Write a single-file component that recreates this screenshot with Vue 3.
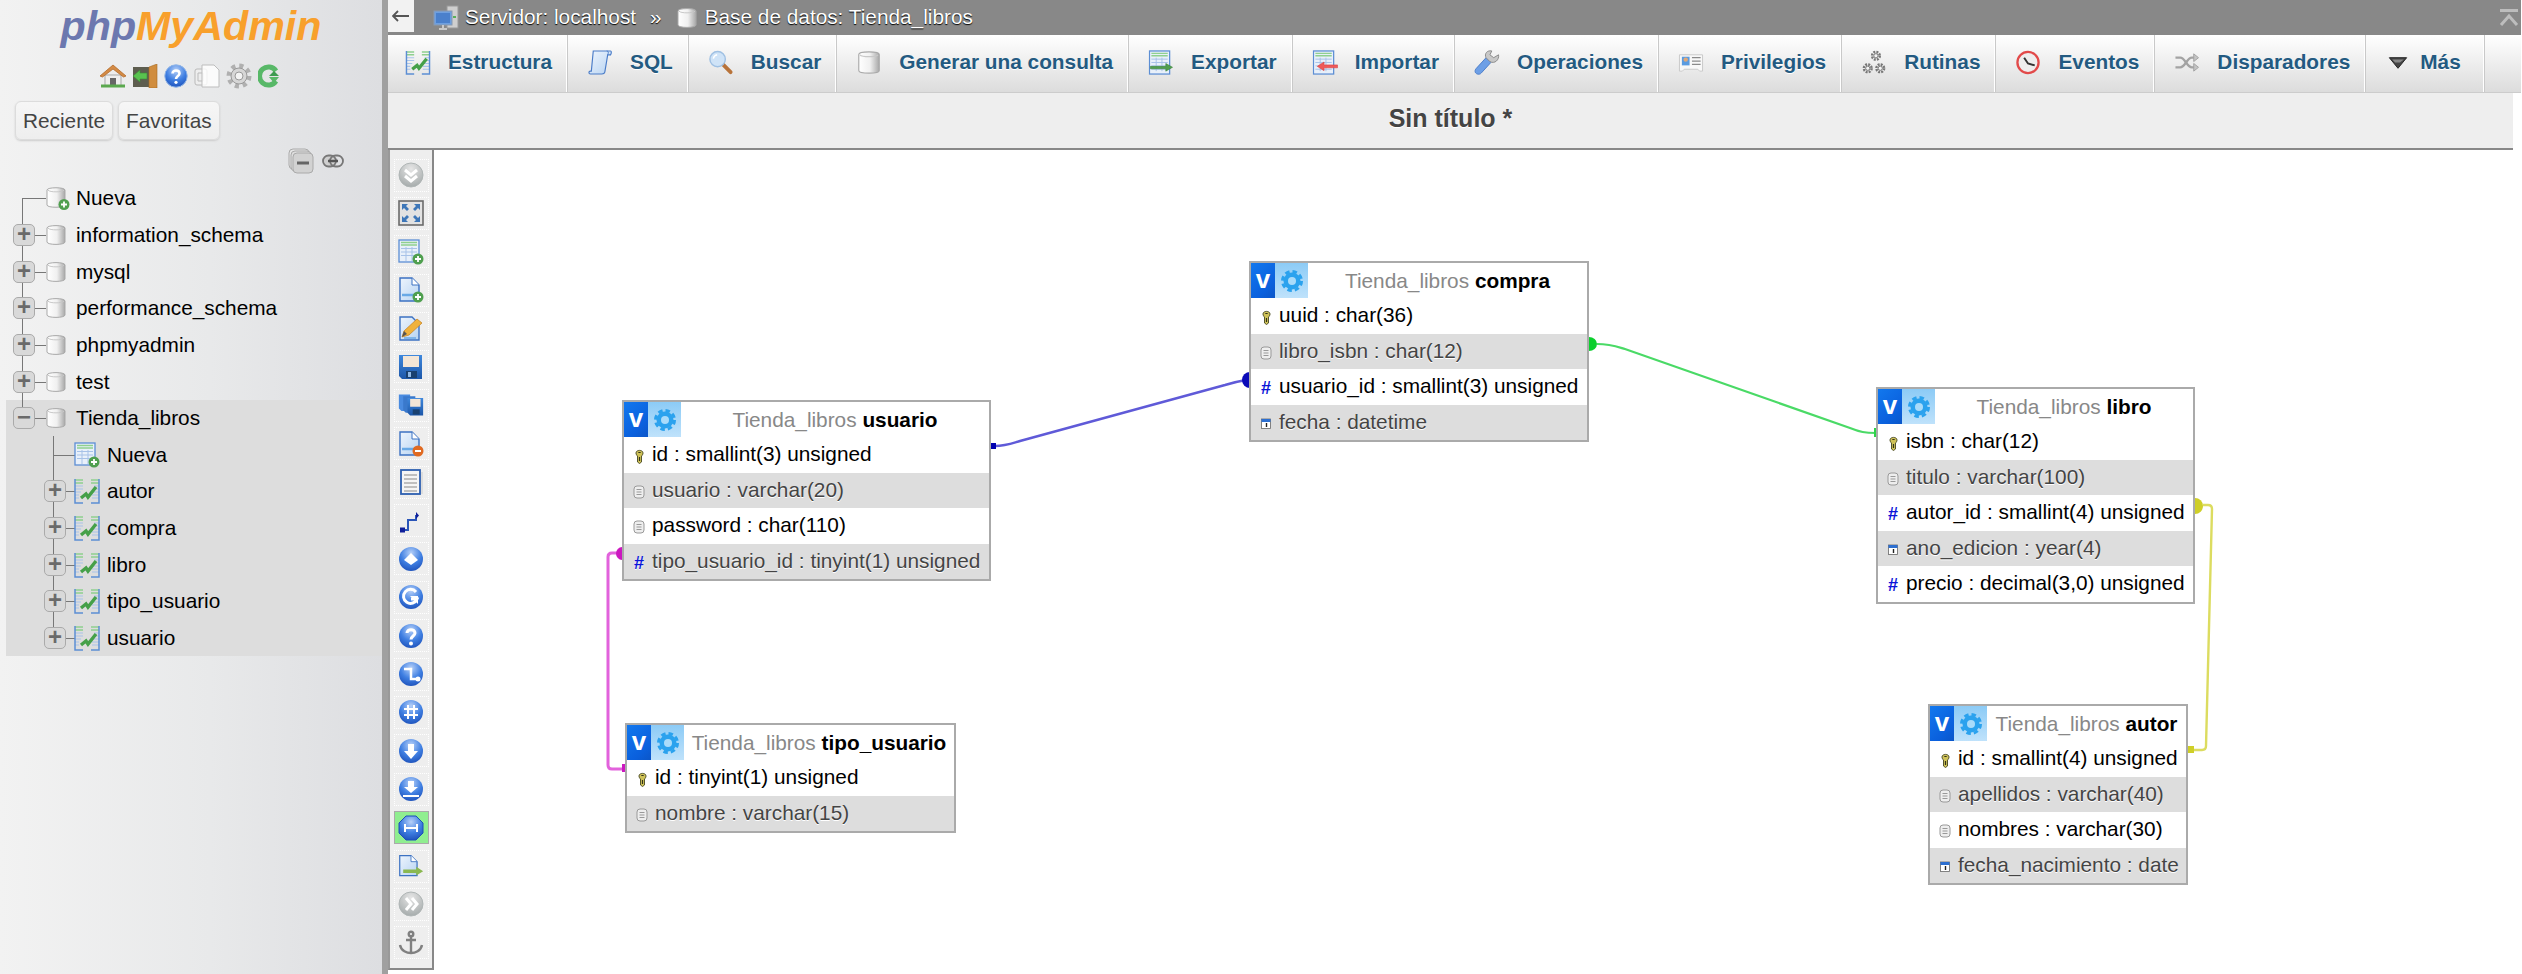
<script setup>
const tabs = [
  { label: 'Estructura', icon: 'rel' },
  { label: 'SQL', icon: 'sql' },
  { label: 'Buscar', icon: 'search' },
  { label: 'Generar una consulta', icon: 'db' },
  { label: 'Exportar', icon: 'export' },
  { label: 'Importar', icon: 'import' },
  { label: 'Operaciones', icon: 'wrench' },
  { label: 'Privilegios', icon: 'card' },
  { label: 'Rutinas', icon: 'gears' },
  { label: 'Eventos', icon: 'clock' },
  { label: 'Disparadores', icon: 'shuffle' },
  { label: 'Más', icon: 'tri' }
]
const databases = ['information_schema', 'mysql', 'performance_schema', 'phpmyadmin', 'test']
const treeTables = ['autor', 'compra', 'libro', 'tipo_usuario', 'usuario']
const tools = ['chevd', 'full', 'tableplus', 'pageplus', 'pageedit', 'floppy', 'floppies', 'pageminus', 'list', 'route', 'bup', 'bg', 'bq', 'brel', 'bgrid', 'bdown', 'bsave', 'bwidth', 'pagearrow', 'chevr', 'anchor']

const OX = 434
const OY = 150
const entities = [
  { name: 'compra', x: 1249, y: 261, w: 340, cols: [['uuid : char(36)', 'key'], ['libro_isbn : char(12)', 'txt'], ['usuario_id : smallint(3) unsigned', 'num'], ['fecha : datetime', 'date']] },
  { name: 'usuario', x: 622, y: 400, w: 369, cols: [['id : smallint(3) unsigned', 'key'], ['usuario : varchar(20)', 'txt'], ['password : char(110)', 'txt'], ['tipo_usuario_id : tinyint(1) unsigned', 'num']] },
  { name: 'libro', x: 1876, y: 387, w: 319, cols: [['isbn : char(12)', 'key'], ['titulo : varchar(100)', 'txt'], ['autor_id : smallint(4) unsigned', 'num'], ['ano_edicion : year(4)', 'date'], ['precio : decimal(3,0) unsigned', 'num']] },
  { name: 'tipo_usuario', x: 625, y: 723, w: 331, cols: [['id : tinyint(1) unsigned', 'key'], ['nombre : varchar(15)', 'txt']] },
  { name: 'autor', x: 1928, y: 704, w: 260, cols: [['id : smallint(4) unsigned', 'key'], ['apellidos : varchar(40)', 'txt'], ['nombres : varchar(30)', 'txt'], ['fecha_nacimiento : date', 'date']] }
]
const pos = (e) => ({ left: e.x - OX + 'px', top: e.y - OY + 'px', width: e.w + 'px' })
</script>

<template>
  <div class="app">
    <svg class="defs" width="0" height="0" aria-hidden="true">
      <defs>
        <linearGradient id="gDb" x1="0" x2="1" y1="0" y2="0"><stop offset="0" stop-color="#fff"/><stop offset=".55" stop-color="#f0f0f0"/><stop offset="1" stop-color="#a8a8a8"/></linearGradient>
        <linearGradient id="gPage" x1="0" x2="1" y1="0" y2="1"><stop offset="0" stop-color="#eef5fd"/><stop offset="1" stop-color="#b7d3f2"/></linearGradient>
        <radialGradient id="gBlue" cx=".5" cy=".25" r=".8"><stop offset="0" stop-color="#b6d0f8"/><stop offset=".55" stop-color="#3f7fe2"/><stop offset="1" stop-color="#1c4fb8"/></radialGradient>
        <radialGradient id="gGray" cx=".5" cy=".25" r=".8"><stop offset="0" stop-color="#e6e6e6"/><stop offset="1" stop-color="#a2a8a8"/></radialGradient>
        <linearGradient id="gFloppy" x1="0" x2="0" y1="0" y2="1"><stop offset="0" stop-color="#3f88dd"/><stop offset="1" stop-color="#1c56a8"/></linearGradient>
      </defs>

      <symbol id="i-db" viewBox="0 0 20 22"><path d="M1 4C1 .8 19 .8 19 4V18C19 21.2 1 21.2 1 18Z" fill="url(#gDb)" stroke="#a9a9a9"/><path d="M2 4.200C4 6.400 16 6.400 18 4.200" fill="none" stroke="#c8c8c8"/></symbol>
      <symbol id="i-dbplus" viewBox="0 0 24 24"><path d="M1 4C1 1 19 1 19 4V19C19 22 1 22 1 19Z" fill="url(#gDb)" stroke="#a9a9a9"/><path d="M2 4.200C4 6.400 16 6.400 18 4.200" fill="none" stroke="#c8c8c8"/><circle cx="18" cy="18.500" r="5.500" fill="#4f9f4f"/><path d="M15 18.500H21M18 15.500V21.500" stroke="#fff" stroke-width="1.800"/></symbol>
      <symbol id="i-rel" viewBox="0 0 26 26">
        <g fill="none"><path d="M1 2H9M1 5H9" stroke="#8fd08f" stroke-width="1.500"/><path d="M1 8H9M1 11H9M1 14H7M1 17H5M1 20H5" stroke="#a9c4ea" stroke-width="1.100"/><path d="M1 1V25H9" stroke="#5c8ed4" stroke-width="1.500"/><path d="M17 2H25M17 5H25" stroke="#8fd08f" stroke-width="1.500"/><path d="M20 8H25M19 11H25M18 14H25M18 17H25M18 20H25" stroke="#a9c4ea" stroke-width="1.100"/><path d="M25 1V25H17" stroke="#5c8ed4" stroke-width="1.500"/></g>
        <path d="M7 20L12 16L14 19L22 9" fill="none" stroke="#45a049" stroke-width="3.400"/>
      </symbol>
      <symbol id="i-sql" viewBox="0 0 26 26"><path d="M6 1H24C25 1 25 3 24 5H21L18 23C17.500 25 16 25 15 25H3C1 25 1 22 3 22H4Z" fill="url(#gPage)" stroke="#4a7cc8" stroke-width="1.200"/><path d="M21 5C22 3 22 1 20 1" fill="none" stroke="#4a7cc8"/></symbol>
      <symbol id="i-search" viewBox="0 0 26 26"><path d="M15 15L23 23" stroke="#b8733a" stroke-width="4" stroke-linecap="round"/><circle cx="9.500" cy="9.500" r="8" fill="#cfe3f7" stroke="#9fc0e3" stroke-width="1.500"/><path d="M5 9A5 5 0 0 1 9 5" fill="none" stroke="#fff" stroke-width="1.500"/></symbol>
      <symbol id="i-table" viewBox="0 0 26 26"><rect x="1" y="1" width="21" height="24" fill="#e8f0fa" stroke="#5c8ed4" stroke-width="1.300"/><path d="M3 3.500H20M3 6H20" stroke="#8fd08f" stroke-width="1.400"/><path d="M3 9.500H20M3 13H20M3 16.500H20M3 20H20M8 8V22M14 8V22" stroke="#a7c2e8"/></symbol>
      <symbol id="i-export" viewBox="0 0 26 26"><use href="#i-table"/><path d="M2 17H18V14L25 18L18 22V19.500H2Z" fill="#4f9f4f" stroke="#3a7f3a" stroke-width=".6"/></symbol>
      <symbol id="i-import" viewBox="0 0 26 26"><use href="#i-table"/><path d="M26 15.500H12V12.500L5 17L12 21.500V18.500H26Z" fill="#ef5a5a" stroke="#d94040" stroke-width=".6"/></symbol>
      <symbol id="i-wrench" viewBox="0 0 26 26"><path d="M3 25C0 24 0 21 2 19L12 8L17 13L7 24C6 25 5 25.500 3 25Z" fill="#6d9fe6" stroke="#4a7cc8"/><path d="M12 8C10 4 13 0 18 1L16 5L20 8L25 5C26 10 21 15 16 12Z" fill="#c8c8c8" stroke="#8a8a8a"/></symbol>
      <symbol id="i-card" viewBox="0 0 26 26"><path d="M1 5H25V22H22L20 20H6L4 22H1Z" fill="#f8f8f8" stroke="#c9c9c9"/><rect x="3.500" y="7" width="8" height="9" fill="#5a9be0"/><circle cx="7.500" cy="10" r="2.300" fill="#e0a878"/><path d="M14 8H23M14 11.500H23M14 15H23" stroke="#8a8a8a" stroke-width="1.300"/></symbol>
      <symbol id="i-gears" viewBox="0 0 26 26"><g fill="none" stroke="#777"><circle cx="15" cy="6" r="4" stroke-width="2.600" stroke-dasharray="2 1.140"/><circle cx="6.500" cy="19" r="4" stroke-width="2.600" stroke-dasharray="2 1.140"/><circle cx="19.500" cy="19" r="4" stroke-width="2.600" stroke-dasharray="2 1.140"/></g><g fill="#f4f4f4" stroke="#777"><circle cx="15" cy="6" r="2.200"/><circle cx="6.500" cy="19" r="2.200"/><circle cx="19.500" cy="19" r="2.200"/></g></symbol>
      <symbol id="i-clock" viewBox="0 0 26 26"><circle cx="13" cy="13" r="11" fill="#eee" stroke="#e24a4a" stroke-width="2.400"/><path d="M9 8L13 14L20 16" fill="none" stroke="#333" stroke-width="2"/></symbol>
      <symbol id="i-shuffle" viewBox="0 0 26 26"><g fill="none" stroke="#a3a3a3" stroke-width="2.400"><path d="M1 8H6C11 8 13 18 18 18H21"/><path d="M1 18H6C11 18 13 8 18 8H21"/></g><path d="M20 4L25 8L20 12ZM20 14L25 18L20 22Z" fill="#c4c4c4" stroke="#a3a3a3"/></symbol>
      <symbol id="i-tri" viewBox="0 0 26 26"><path d="M4 8H22L13 19Z" fill="#444" stroke="#222"/><path d="M7 10H19L15 13H10Z" fill="#888"/></symbol>
      <symbol id="i-server" viewBox="0 0 26 26"><rect x="14" y="1" width="11" height="22" fill="#cfcfcf" stroke="#999"/><rect x="1" y="6" width="18" height="14" fill="#6d9fe0" stroke="#8a9ab0"/><rect x="3" y="8" width="14" height="10" fill="#4a80cc"/><path d="M6 24H14M10 20V24" stroke="#c8c8c8" stroke-width="2"/><path d="M20 12H23" stroke="#5ab05a" stroke-width="2"/></symbol>
      <symbol id="i-home" viewBox="0 0 26 24"><path d="M5 11H21V22H5Z" fill="#eee" stroke="#a9a9a9"/><path d="M10 14H16V22H10Z" fill="#666"/><path d="M0 12L13 1L26 12L23.500 13L13 5L2.500 13Z" fill="#d48b45" stroke="#b36a28" stroke-width=".8"/><path d="M1 22H25" stroke="#5aa84e" stroke-width="3"/></symbol>
      <symbol id="i-exit" viewBox="0 0 26 24"><rect x="1" y="3" width="19" height="20" fill="#5d5d4f"/><path d="M17 3L25 0V24H17Z" fill="#d08d3f" stroke="#a56a22" stroke-width=".6"/><path d="M1 12L8 6V9H15V15H8V18Z" fill="#59c24f" stroke="#3a8f35" stroke-width=".6"/></symbol>
      <symbol id="i-help" viewBox="0 0 24 24"><circle cx="12" cy="12" r="11.200" fill="url(#gBlue)" stroke="#8fb4e6"/><path d="M8.500 9.500C8.500 5.500 15.500 5.500 15.500 9.500C15.500 12 12 12 12 15" fill="none" stroke="#fff" stroke-width="2.600"/><circle cx="12" cy="18.300" r="1.600" fill="#fff"/></symbol>
      <symbol id="i-docs" viewBox="0 0 26 24"><rect x="1" y="5" width="12" height="16" rx="2" fill="#eee" stroke="#b9b9b9"/><path d="M4 9V17M9 9V17M4 9H9M4 17H9" stroke="#bbb"/><path d="M8 1H20L25 6V23H8Z" fill="#fff" fill-opacity=".8" stroke="#bdbdbd"/></symbol>
      <symbol id="i-gear" viewBox="0 0 26 26"><circle cx="13" cy="13" r="10" fill="none" stroke="#b0b0b0" stroke-width="5" stroke-dasharray="4 3.850"/><circle cx="13" cy="13" r="8" fill="#d6d6d6" stroke="#999"/><circle cx="13" cy="13" r="4" fill="#f3f3f3" stroke="#999"/></symbol>
      <symbol id="i-reload" viewBox="0 0 22 24"><path d="M18 7A9 9 0 1 0 18 17" fill="none" stroke="#58b868" stroke-width="5"/><path d="M21 12H11L16 7Z" fill="#3d9a50"/><path d="M11 13H21L16 19Z" fill="#58b868"/></symbol>
      <symbol id="i-collapse" viewBox="0 0 26 26"><rect x="1" y="1" width="20" height="20" rx="4" fill="#e4e4e4" stroke="#aaa"/><rect x="3" y="3" width="20" height="20" rx="4" fill="#dcdcdc" stroke="#aaa"/><rect x="5" y="5" width="20" height="20" rx="4" fill="#d2d2d2" stroke="#aaa"/><rect x="9" y="13.500" width="12" height="3" fill="#666"/></symbol>
      <symbol id="i-link" viewBox="0 0 22 14"><rect x="1" y="1.500" width="13" height="11" rx="5.500" fill="#cfcfcf" stroke="#777" stroke-width="1.800"/><rect x="8" y="1.500" width="13" height="11" rx="5.500" fill="none" stroke="#777" stroke-width="1.800"/><path d="M6 7H16" stroke="#555" stroke-width="2.500"/></symbol>
      <symbol id="i-tableplus" viewBox="0 0 26 26"><rect x="1" y="1" width="20" height="22" fill="#e8f0fa" stroke="#5c8ed4" stroke-width="1.300"/><path d="M3 3.500H19M3 6H19" stroke="#8fd08f" stroke-width="1.400"/><path d="M3 9.500H19M3 13H19M3 16.500H19M8 8V22M14 8V22" stroke="#a7c2e8"/><circle cx="20" cy="20" r="5.500" fill="#4f9f4f"/><path d="M17 20H23M20 17V23" stroke="#fff" stroke-width="1.800"/></symbol>

      <symbol id="t-chevd" viewBox="0 0 26 26"><circle cx="13" cy="13" r="12" fill="url(#gGray)" stroke="#b0b6b6"/><path d="M7 8L13 13L19 8M7 14L13 19L19 14" fill="none" stroke="#fff" stroke-width="3"/></symbol>
      <symbol id="t-chevr" viewBox="0 0 26 26"><circle cx="13" cy="13" r="12" fill="url(#gGray)" stroke="#b0b6b6"/><path d="M8 7L13 13L8 19M14 7L19 13L14 19" fill="none" stroke="#fff" stroke-width="3"/></symbol>
      <symbol id="t-full" viewBox="0 0 26 26"><rect x="1" y="1" width="24" height="24" fill="#e2e2e2" stroke="#6b6b6b" stroke-width="1.600"/><path d="M4 4H10L8 6L11 9L9 11L6 8L4 10ZM22 4H16L18 6L15 9L17 11L20 8L22 10ZM4 22H10L8 20L11 17L9 15L6 18L4 16ZM22 22H16L18 20L15 17L17 15L20 18L22 16Z" fill="#3d76b8"/></symbol>
      <symbol id="t-tableplus" viewBox="0 0 26 26"><use href="#i-tableplus"/></symbol>
      <symbol id="i-page" viewBox="0 0 26 26"><path d="M2 1H14L21 8V24H2Z" fill="url(#gPage)" stroke="#3d72c2" stroke-width="1.400"/><path d="M14 1V8H21" fill="#fff" stroke="#3d72c2"/><path d="M4 18H16" stroke="#69a9e6" stroke-width="2.500"/></symbol>
      <symbol id="t-pageplus" viewBox="0 0 26 26"><use href="#i-page"/><circle cx="20" cy="20" r="5.500" fill="#4f9f4f"/><path d="M17 20H23M20 17V23" stroke="#fff" stroke-width="1.800"/></symbol>
      <symbol id="t-pageminus" viewBox="0 0 26 26"><use href="#i-page"/><circle cx="20" cy="20" r="5.500" fill="#e06a22"/><path d="M17 20H23" stroke="#fff" stroke-width="2"/></symbol>
      <symbol id="t-pageedit" viewBox="0 0 26 26"><path d="M2 1H14L21 8V24H2Z" fill="url(#gPage)" stroke="#3d72c2" stroke-width="1.400"/><path d="M4 21L6 15L19 3L24 7L11 19Z" fill="#f0b23c" stroke="#c8862a" stroke-width=".8"/><path d="M4 21L6 15L9 18Z" fill="#555"/><path d="M6 22H18" stroke="#69a9e6" stroke-width="1.500"/></symbol>
      <symbol id="t-floppy" viewBox="0 0 26 26"><path d="M1 1H24V25H4L1 22Z" fill="url(#gFloppy)"/><rect x="5" y="2" width="16" height="11" fill="#f4e6d6"/><rect x="8" y="17" width="11" height="7" fill="#19406f"/><rect x="10" y="18" width="3" height="5" fill="#8fb8e6"/></symbol>
      <symbol id="t-floppies" viewBox="0 0 30 26"><path d="M1 1H14V20H4L1 17Z" fill="#4a8be0"/><path d="M6 3H20V22H9L6 19Z" fill="#3a79cc"/><path d="M11 5H29V25H14L11 22Z" fill="url(#gFloppy)"/><rect x="14" y="6" width="12" height="9" fill="#f4e6d6"/><rect x="17" y="18" width="8" height="6" fill="#19406f"/></symbol>
      <symbol id="t-list" viewBox="0 0 26 26"><rect x="3" y="1" width="19" height="24" fill="#f5f5f5" stroke="#2d5fb0" stroke-width="1.800"/><path d="M6 6H19M6 10H19M6 14H19M6 18H19M6 22H19" stroke="#8a8a8a" stroke-width="1.200"/><rect x="23" y="3" width="2" height="22" fill="#ddd"/></symbol>
      <symbol id="t-route" viewBox="0 0 26 26"><path d="M4 22H10V12H18V7" fill="none" stroke="#2a55b8" stroke-width="2"/><rect x="2" y="19.500" width="5" height="5" fill="#0f1f9a"/><path d="M18 4V11L21 7.500Z" fill="#0f1f9a"/></symbol>
      <symbol id="t-bup" viewBox="0 0 26 26"><circle cx="13" cy="13" r="12" fill="url(#gBlue)"/><path d="M6 14L13 7L20 14L13 19Z" fill="#fff"/></symbol>
      <symbol id="t-bg" viewBox="0 0 26 26"><circle cx="13" cy="13" r="12" fill="url(#gBlue)"/><path d="M18 8A7 7 0 1 0 19 15H13" fill="none" stroke="#fff" stroke-width="3"/><path d="M12 12H20V20Z" fill="#fff"/></symbol>
      <symbol id="t-bq" viewBox="0 0 26 26"><circle cx="13" cy="13" r="12" fill="url(#gBlue)"/><path d="M9 10C9 5.500 17 5.500 17 10C17 13 13 13 13 16.500" fill="none" stroke="#fff" stroke-width="3"/><circle cx="13" cy="20.500" r="2" fill="#fff"/></symbol>
      <symbol id="t-brel" viewBox="0 0 26 26"><circle cx="13" cy="13" r="12" fill="url(#gBlue)"/><path d="M6 8H13V18H19" fill="none" stroke="#fff" stroke-width="2.500"/><circle cx="20" cy="18" r="2.500" fill="#fff"/></symbol>
      <symbol id="t-bgrid" viewBox="0 0 26 26"><circle cx="13" cy="13" r="12" fill="url(#gBlue)"/><path d="M10 6V20M16 6V20M6 10H20M6 16H20" stroke="#fff" stroke-width="2"/></symbol>
      <symbol id="t-bdown" viewBox="0 0 26 26"><circle cx="13" cy="13" r="12" fill="url(#gBlue)"/><path d="M10 6H16V13H20L13 21L6 13H10Z" fill="#fff"/></symbol>
      <symbol id="t-bsave" viewBox="0 0 26 26"><circle cx="13" cy="13" r="12" fill="url(#gBlue)"/><path d="M10 5H16V11H20L13 17L6 11H10ZM5 19H21V21H5Z" fill="#fff"/></symbol>
      <symbol id="t-bwidth" viewBox="0 0 26 26"><path d="M8 1H18L25 8V18L18 25H8L1 18V8Z" fill="url(#gBlue)" stroke="#1c4fb8"/><path d="M7 9V17M19 9V17M7 13H19" fill="none" stroke="#fff" stroke-width="2"/></symbol>
      <symbol id="t-pagearrow" viewBox="0 0 30 26"><path d="M2 1H15L22 8V24H2Z" fill="url(#gPage)" stroke="#3d72c2" stroke-width="1.400"/><path d="M15 1V8H22" fill="#fff" stroke="#3d72c2"/><path d="M6 17H21V14L29 19L21 24V21H6Z" fill="#8ab850"/></symbol>
      <symbol id="t-anchor" viewBox="0 0 26 26"><g fill="none" stroke="#808080" stroke-width="2.400"><circle cx="13" cy="4" r="2.300"/><path d="M13 6V23M8 10H18M2 15C3 21 9 23 13 23C17 23 23 21 24 15"/></g></symbol>

      <symbol id="c-gear" viewBox="0 0 24 24"><circle cx="12" cy="12" r="9.500" fill="none" stroke="#2ba2ee" stroke-width="3" stroke-dasharray="4.500 3"/><circle cx="12" cy="12" r="8.500" fill="#2ba2ee"/><circle cx="12" cy="12" r="4" fill="#a9dbfa"/></symbol>
      <symbol id="c-key" viewBox="0 0 11 15"><path d="M2 4C2 .5 9 .5 9 4C9 5.500 8 6.500 7.500 7V13L5.500 14.500L3.500 13V7C3 6.500 2 5.500 2 4Z" fill="#cfc257" stroke="#55552c"/><path d="M4.300 3.500H6.700M5.500 8V12" stroke="#33331a" stroke-width="1.200"/></symbol>
      <symbol id="c-txt" viewBox="0 0 12 14"><rect x="1" y="1" width="10" height="12" rx="3" fill="#eee" stroke="#999"/><path d="M3.500 4.500H8.500M3.500 7H8.500M3.500 9.500H8.500" stroke="#999"/></symbol>
      <symbol id="c-date" viewBox="0 0 10 11"><rect x=".5" y="1" width="9" height="9.500" fill="#fff" stroke="#666" stroke-width=".8"/><rect x=".5" y="1" width="9" height="3" fill="#2d6fd0"/><path d="M5.500 5V9" stroke="#222" stroke-width="1.400"/></symbol>
    </svg>

    <aside class="sidebar">
      <div class="logo"><span class="php">php</span><span class="my">MyAdmin</span></div>
      <div class="quick">
        <svg width="26" height="24"><use href="#i-home"/></svg>
        <svg width="26" height="24"><use href="#i-exit"/></svg>
        <svg width="24" height="24"><use href="#i-help"/></svg>
        <svg width="26" height="24"><use href="#i-docs"/></svg>
        <svg width="26" height="26"><use href="#i-gear"/></svg>
        <svg width="22" height="24"><use href="#i-reload"/></svg>
      </div>
      <div class="recents">
        <button class="rbtn">Reciente</button>
        <button class="rbtn">Favoritas</button>
      </div>
      <div class="collapse">
        <svg width="26" height="26"><use href="#i-collapse"/></svg>
        <svg width="22" height="14"><use href="#i-link"/></svg>
      </div>
      <div class="tree">
        <div class="row lv0 first">
          <span class="exp none"></span>
          <svg class="dbi" width="24" height="24"><use href="#i-dbplus"/></svg>
          <span class="lbl new">Nueva</span>
        </div>
        <div v-for="d in databases" :key="d" class="row lv0">
          <span class="exp">+</span>
          <svg class="dbi" width="20" height="22"><use href="#i-db"/></svg>
          <span class="lbl">{{ d }}</span>
        </div>
        <div class="current">
          <div class="row lv0 last">
            <span class="exp">−</span>
            <svg class="dbi" width="20" height="22"><use href="#i-db"/></svg>
            <span class="lbl">Tienda_libros</span>
          </div>
          <div class="row lv1">
            <span class="exp none"></span>
            <svg class="tbi" width="26" height="26"><use href="#i-tableplus"/></svg>
            <span class="lbl">Nueva</span>
          </div>
          <div v-for="(t, i) in treeTables" :key="t" class="row lv1" :class="{ last: i === treeTables.length - 1 }">
            <span class="exp">+</span>
            <svg class="tbi" width="26" height="26"><use href="#i-rel"/></svg>
            <span class="lbl">{{ t }}</span>
          </div>
        </div>
      </div>
    </aside>
    <div class="resizer"></div>

    <main class="main">
      <header class="topbar">
        <span class="back"><svg width="18" height="12" viewBox="0 0 18 12"><path d="M1 6H17M6 1L1 6L6 11" fill="none" stroke="#555" stroke-width="1.800"/></svg></span>
        <svg class="srv" width="26" height="26"><use href="#i-server"/></svg>
        <span class="crumb">Servidor: localhost</span>
        <span class="sep">»</span>
        <svg class="bd" width="20" height="22"><use href="#i-db"/></svg>
        <span class="crumb">Base de datos: Tienda_libros</span>
        <svg class="up" width="20" height="20" viewBox="0 0 20 20"><path d="M1 2.500H19" stroke="#bdbdbd" stroke-width="3"/><path d="M2 17L10 8L18 17" fill="none" stroke="#bdbdbd" stroke-width="3"/></svg>
      </header>
      <nav class="tabs">
        <a v-for="t in tabs" :key="t.label" class="tab">
          <svg class="tabi" width="26" height="25"><use :href="'#i-' + t.icon"/></svg>
          <span>{{ t.label }}</span>
        </a>
      </nav>
      <h2 class="title">Sin título *</h2>
      <section class="designer">
        <div class="tools">
          <span v-for="t in tools" :key="t" class="tool" :class="{ on: t === 'bwidth' }">
            <svg width="26" height="26"><use :href="'#t-' + t"/></svg>
          </span>
        </div>
        <div class="canvas">
          <svg class="wires" :viewBox="`${OX} ${OY} 2079 820`" width="2079" height="820">
            <g fill="none">
              <path d="M995 446C1005 446 1010 444 1020 441L1225 385C1235 382 1240 381 1246 380" stroke="#5f5ad8" stroke-width="2.400"/>
              <path d="M1597 344C1610 344 1615 346 1625 349L1850 428C1860 432 1865 433 1876 433" stroke="#4ada66" stroke-width="2.200"/>
              <path d="M2203 505H2208Q2212 505 2212 509L2206 746Q2206 750 2202 750H2190" stroke="#dcdc60" stroke-width="2.400"/>
              <path d="M617 553H612Q608 553 608 557V765Q608 769 612 769H625" stroke="#e262dc" stroke-width="3"/>
            </g>
            <rect x="991" y="443" width="5" height="6" fill="#0000b0"/>
            <path d="M1250 372A8 8 0 0 0 1250 388Z" fill="#0a0ab8"/>
            <path d="M1589 337A8 7 0 0 1 1589 351Z" fill="#0ccf2e"/>
            <rect x="1874" y="428" width="2" height="9" fill="#2fd24a"/>
            <path d="M2195 498A8 8 0 0 1 2195 514Z" fill="#cfcf28"/>
            <rect x="2188" y="746" width="6" height="7" fill="#cfcf28"/>
            <path d="M622 547A6 6.500 0 0 0 622 560Z" fill="#cc18c0"/>
            <rect x="622" y="764" width="4" height="8" fill="#cc18c0"/>
          </svg>
          <article v-for="e in entities" :key="e.name" class="entity" :style="pos(e)">
            <div class="head">
              <span class="vbtn">v</span>
              <span class="gbtn"><svg width="24" height="24"><use href="#c-gear"/></svg></span>
              <span class="ename"><span class="db">Tienda_libros</span> <b>{{ e.name }}</b></span>
            </div>
            <div v-for="(c, i) in e.cols" :key="c[0]" class="col" :class="{ alt: i % 2 === 1 }">
              <span class="cic">
                <span v-if="c[1] === 'num'" class="hash">#</span>
                <svg v-else-if="c[1] === 'key'" width="11" height="15"><use href="#c-key"/></svg>
                <svg v-else-if="c[1] === 'txt'" width="12" height="14"><use href="#c-txt"/></svg>
                <svg v-else width="10" height="11"><use href="#c-date"/></svg>
              </span>
              <span class="ctext">{{ c[0] }}</span>
            </div>
          </article>
        </div>
      </section>
    </main>
  </div>
</template>

<style scoped>
.app {
  display: flex;
  width: 2522px;
  height: 974px;
  overflow: hidden;
  background: #fff;
  font-family: "Liberation Sans", Arial, sans-serif;
  font-size: 20.8px;
  color: #000;
}
.defs { position: absolute; }
svg { display: block; flex: none; }

.sidebar {
  width: 382px;
  flex: none;
  background: linear-gradient(to right, #f2f2f2, #e8e9ea 55%, #dddee1);
}
.logo {
  height: 58px;
  line-height: 52px;
  text-align: center;
  font-size: 41.2px;
  font-weight: bold;
  font-style: italic;
}
.php { color: #6c78af; }
.my { color: #f8a02c; }
.quick {
  display: flex;
  justify-content: center;
  align-items: center;
  gap: 6px;
  height: 26px;
  margin-top: 5px;
  padding-right: 3px;
}
.recents {
  display: flex;
  gap: 5px;
  padding-left: 15px;
  margin-top: 12px;
}
.rbtn {
  height: 39px;
  padding: 0 7px;
  font: inherit;
  color: #444;
  background: linear-gradient(#f6f6f6, #eeeeee);
  border: 1px solid #dcdcdc;
  border-radius: 6px;
  box-shadow: 0 1px 2px #ccc;
}
.collapse {
  display: flex;
  justify-content: flex-end;
  align-items: center;
  gap: 8px;
  height: 26px;
  margin-top: 8px;
  padding-right: 38px;
}
.tree { margin-top: 6px; }
.row {
  position: relative;
  display: flex;
  align-items: center;
  height: 36.65px;
}
.row::before {
  content: "";
  position: absolute;
  top: 0;
  bottom: 0;
  border-left: 1px solid #777;
}
.row::after {
  content: "";
  position: absolute;
  top: 50%;
  border-top: 1px solid #777;
}
.lv0 { padding-left: 13px; }
.lv0::before { left: 22px; }
.lv0::after { left: 22px; width: 24px; }
.lv1 { padding-left: 44px; }
.lv1::before { left: 53px; }
.lv1::after { left: 53px; width: 22px; }
.first::before { top: 50%; }
.last::before { bottom: 50%; }
.exp {
  position: relative;
  z-index: 1;
  flex: none;
  box-sizing: border-box;
  width: 22px;
  height: 22px;
  line-height: 18px;
  text-align: center;
  font-size: 24px;
  font-weight: bold;
  color: #6a6a6a;
  background: #d9d9d9;
  border: 1px solid #aaa;
  border-radius: 5px;
}
.exp.none { visibility: hidden; }
.dbi { position: relative; z-index: 1; margin-left: 11px; margin-right: 10px; }
.lv0 .lbl.new { margin-left: -4px; }
.tbi { position: relative; z-index: 1; margin-left: 8px; margin-right: 7px; }
.current {
  margin-left: 6px;
  background: #dddddd;
}
.current .row { margin-left: -6px; }

.resizer {
  width: 6px;
  flex: none;
  background: #a0a0a0;
}
.main {
  flex: 1;
  min-width: 0;
  display: flex;
  flex-direction: column;
}
.topbar {
  display: flex;
  align-items: center;
  height: 35px;
  flex: none;
  background: #888;
  margin-right: 1px;
  color: #fff;
  text-shadow: 0 1px 1px #000;
}
.crumb, .sep { position: relative; top: -1px; }
.back {
  display: flex;
  align-items: center;
  justify-content: center;
  align-self: flex-start;
  width: 26px;
  height: 32px;
  background: #f2f2f2;
}
.srv { margin-left: 19px; margin-right: 6px; }
.sep { margin: 0 15px 0 14px; }
.bd { margin-right: 8px; }
.up { margin-left: auto; margin-right: 2px; }
.tabs {
  display: flex;
  height: 58px;
  flex: none;
  box-sizing: border-box;
  background: linear-gradient(#fff, #dcdcdc);
  border-bottom: 1px solid #ccc;
  margin-right: 1px;
}
.tab {
  display: flex;
  align-items: center;
  padding: 0 14px 3px 20px;
  border-right: 1px solid #fff;
  box-shadow: 1px 0 0 #c9c9c9;
  color: #235a81;
  font-weight: bold;
  text-shadow: 0 1px 0 #fff;
}
.tab:first-child { padding-left: 17px; }
.tabi { margin-right: 17px; }
.tab:last-child { padding-right: 22px; }
.tab:last-child .tabi { margin-right: 9px; }
.title {
  flex: none;
  height: 55px;
  margin: 0 9px 0 0;
  line-height: 51px;
  text-align: center;
  font-size: 25px;
  font-weight: bold;
  color: #444;
  background: #eee;
  text-shadow: 0 1px 0 #fff;
}
.designer {
  display: flex;
  height: 822px;
  flex: none;
  margin-right: 9px;
  border-top: 2px solid #888;
  box-sizing: border-box;
}
.tools {
  flex: none;
  box-sizing: border-box;
  width: 46px;
  height: 820px;
  padding-top: 8.500px;
  display: flex;
  flex-direction: column;
  align-items: center;
  background: #eee;
  border-left: 2px solid #999;
  border-right: 2px solid #888;
  border-bottom: 2px solid #888;
}
.tool {
  flex: none;
  box-sizing: border-box;
  width: 35px;
  height: 33px;
  margin-bottom: 5.400px;
  display: flex;
  align-items: center;
  justify-content: center;
  border: 1px dotted #fff;
}
.tool.on {
  background: #90ee90;
  border: 1px solid #aaa;
}
.canvas {
  position: relative;
  flex: 1;
  background: #fff;
}
.wires {
  position: absolute;
  left: 0;
  top: 0;
}
.entity {
  position: absolute;
  box-sizing: border-box;
  border: 2px solid #aaa;
  background: #fff;
}
.head {
  display: flex;
  align-items: center;
  height: 35px;
}
.vbtn {
  flex: none;
  width: 24px;
  height: 35px;
  line-height: 33px;
  text-align: center;
  color: #fff;
  font-size: 26px;
  font-weight: bold;
  background: linear-gradient(135deg, #1278ee, #0a60dd 70%, #0b56c8);
}
.gbtn {
  flex: none;
  width: 33px;
  height: 35px;
  display: flex;
  align-items: center;
  justify-content: center;
  background: linear-gradient(#8ccbf6, #bfe2fb);
}
.ename {
  flex: 1;
  text-align: center;
  white-space: nowrap;
}
.db { color: #888; }
.col {
  display: flex;
  align-items: center;
  height: 35.500px;
  white-space: nowrap;
}
.col.alt {
  background: #ddd;
  color: #444;
  text-shadow: 0 1px 0 #fff;
}
.cic {
  flex: none;
  width: 28px;
  display: flex;
  justify-content: center;
  padding-left: 2px;
  box-sizing: border-box;
  padding-top: 3px;
}
.hash {
  color: #0b15d8;
  font-size: 18px;
  font-weight: bold;
  line-height: 16px;
}
.ctext { position: relative; top: -0.500px; }
</style>

<style>
html, body { margin: 0; background: #fff; overflow: hidden; }
</style>
